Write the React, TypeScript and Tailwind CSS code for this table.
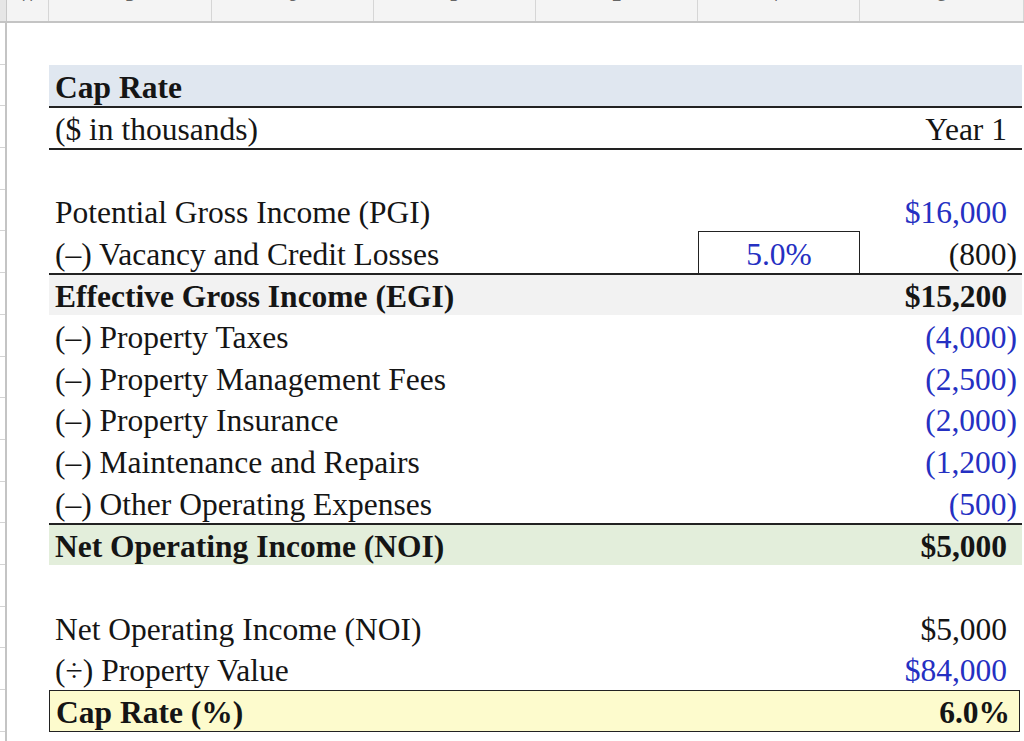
import React from "react";

type Row = {
  label?: string;
  value?: string;
  neg?: boolean;
  blue?: boolean;
  bold?: boolean;
  bg?: string;
  topBorder?: boolean;
  box?: string;
  yellow?: boolean;
};

const rows: Row[] = [
  {},
  { label: "Cap Rate", bold: true, bg: "bg-[#e0e7f0]" },
  { label: "($ in thousands)", value: "Year 1", topBorder: true },
  { topBorder: true },
  { label: "Potential Gross Income (PGI)", value: "$16,000", blue: true },
  { label: "(\u2013) Vacancy and Credit Losses", value: "(800)", neg: true, box: "5.0%" },
  { label: "Effective Gross Income (EGI)", value: "$15,200", bold: true, bg: "bg-[#f2f2f2]", topBorder: true },
  { label: "(\u2013) Property Taxes", value: "(4,000)", neg: true, blue: true },
  { label: "(\u2013) Property Management Fees", value: "(2,500)", neg: true, blue: true },
  { label: "(\u2013) Property Insurance", value: "(2,000)", neg: true, blue: true },
  { label: "(\u2013) Maintenance and Repairs", value: "(1,200)", neg: true, blue: true },
  { label: "(\u2013) Other Operating Expenses", value: "(500)", neg: true, blue: true },
  { label: "Net Operating Income (NOI)", value: "$5,000", bold: true, bg: "bg-[#e3eedb]", topBorder: true },
  {},
  { label: "Net Operating Income (NOI)", value: "$5,000" },
  { label: "(\u00f7) Property Value", value: "$84,000", blue: true },
  { label: "Cap Rate (%)", value: "6.0%", bold: true, yellow: true },
  {},
];

const colLetters = ["A", "B", "C", "D", "E", "F", "G"];
const colWidths = ["w-[42px]", "w-[163px]", "w-[162px]", "w-[162px]", "w-[162px]", "w-[162px]", "w-[164px]"];

export default function App() {
  return (
    <div
      className="w-[1024px] h-[741px] overflow-hidden bg-white text-[#151515]"
      style={{ fontFamily: '"Liberation Serif", "Times New Roman", serif' }}
    >
      {/* column header strip */}
      <div className="flex h-[23px] bg-[#f4f4f4] border-b-2 border-[#c4c4c4]">
        <div className="w-[7px] shrink-0 bg-[#e6e6e6] border-r border-[#c8c8c8]" />
        {colLetters.map((l, i) => (
          <div
            key={l}
            className={`${colWidths[i]} shrink-0 border-r border-[#d6d6d6] flex justify-center overflow-hidden`}
            style={{ fontFamily: '"Liberation Sans", Arial, sans-serif' }}
          >
            <span className="text-[14px] leading-none -mt-[11px] text-[#666]">{l}</span>
          </div>
        ))}
      </div>

      <div className="flex">
        {/* row header strip */}
        <div className="w-[7px] shrink-0 border-r-2 border-[#c4c4c4] flex flex-col">
          {rows.map((_, i) => (
            <div key={i} className="h-[41.7px] border-b border-[#d4d4d4]" />
          ))}
        </div>
        {/* column A */}
        <div className="w-[42px] shrink-0" />
        {/* table */}
        <div className="w-[973px] shrink-0 flex flex-col">
          {rows.map((r, i) => {
            const color = r.blue ? "text-[#2530c2]" : "text-[#151515]";
            const weight = r.bold ? "font-bold" : "font-normal";
            const rowCls = [
              "h-[41.7px] grid grid-cols-[649px_162px_162px] items-center text-[31.5px] leading-none",
              r.bg ?? "",
              r.topBorder ? "border-t-2 border-[#222]" : "",
              r.yellow ? "bg-[#fdfbcd] border-[1.5px] border-[#222] w-[971px]" : "",
            ].join(" ");
            return (
              <div key={i} className={rowCls}>
                <div className={`pl-[6px] pt-[4px] whitespace-nowrap ${weight}`}>{r.label ?? ""}</div>
                <div className="h-full">
                  {r.box && (
                    <div className="h-full border border-[#222] border-b-0 flex items-center justify-center pt-[4px] text-[#2530c2]">
                      {r.box}
                    </div>
                  )}
                </div>
                <div
                  className={`text-right whitespace-nowrap pt-[4px] ${weight} ${color} ${
                    r.neg ? "pr-[5px]" : r.yellow ? "pr-[13px]" : "pr-[15px]"
                  }`}
                >
                  {r.value ?? ""}
                </div>
              </div>
            );
          })}
        </div>
      </div>
    </div>
  );
}
